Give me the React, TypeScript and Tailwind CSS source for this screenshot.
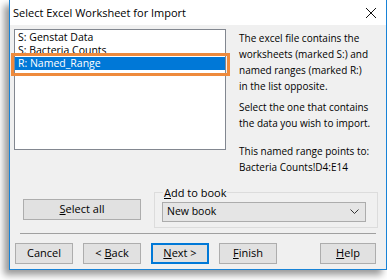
import React from 'react';

const font = { fontFamily: '"Open Sans", "Noto Sans", sans-serif' };

const Btn: React.FC<{ children: React.ReactNode; w?: string; primary?: boolean }> = ({ children, w = 'w-[58px]', primary }) => (
  <div
    className={`${w} h-[21px] flex items-center justify-center bg-[#e1e1e1] text-[11px] text-black ${
      primary ? 'border-2 border-[#0078d7]' : 'border border-[#adadad]'
    }`}
  >
    {children}
  </div>
);

export default function App() {
  return (
    <div className="w-[387px] h-[280px] bg-white pl-[9px]" style={font}>
      <div className="relative w-[378px] h-[270px] flex flex-col border-x border-b border-[#1883d7] bg-[#f0f0f0] shadow-[-5px_5px_7px_rgba(0,0,0,0.4)]">
        {/* title bar */}
        <div className="h-[25px] bg-white flex items-center justify-between pl-[3px] pr-[6px] pt-[1px]">
          <span className="text-[11px] text-black">Select Excel Worksheet for Import</span>
          <svg width="12" height="12" viewBox="0 0 12 12" className="mr-[3px]">
            <path d="M1 1 L11 11 M11 1 L1 11" stroke="#111" strokeWidth="1" />
          </svg>
        </div>

        <div className="flex-1 flex flex-col">
          {/* top row */}
          <div className="flex pt-[4px] pl-[4px] gap-[13px]">
            <div className="w-[212px] h-[121px] bg-white border border-[#828790] pt-[1px] text-[10.5px] leading-[13px]">
              <div className="pl-[3px] h-[13px]">S: Genstat Data</div>
              <div className="pl-[3px] h-[13px]">S: Bacteria Counts</div>
              <div className="pl-[3px] h-[13px] bg-[#0078d7] text-white">R: Named_Range</div>
            </div>
            <div className="text-[10px] leading-[16px] text-black whitespace-nowrap pt-[1px]">
              <p>
                The excel file contains the
                <br />
                worksheets (marked S:) and
                <br />
                named ranges (marked R:)
                <br />
                in the list opposite.
              </p>
              <p className="mt-[5px]">
                Select the one that contains
                <br />
                the data you wish to import.
              </p>
              <p className="mt-[12px]">
                This named range points to:
                <br />
                Bacteria Counts!D4:E14
              </p>
            </div>
          </div>

          {/* middle row */}
          <div className="flex items-end mt-[auto] pl-[13px] gap-[13px]">
            <div className="mb-[8px]">
              <Btn w="w-[118px]">
                <span>
                  <u>S</u>elect all
                </span>
              </Btn>
            </div>
            <fieldset className="w-[224px] border border-[#dcdcdc] pl-[7px] pb-[5px]">
              <legend className="ml-[1px] px-[1px] text-[11px] leading-[13px] text-black">
                <u>A</u>dd to book
              </legend>
              <div className="w-[204px] h-[20px] mt-[3px] flex items-center justify-between bg-[#e5e5e5] border border-[#acacac] pl-[4px] pr-[6px] text-[10.5px]">
                <span>New book</span>
                <svg width="9" height="6" viewBox="0 0 9 6">
                  <path d="M0.5 0.5 L4.5 4.5 L8.5 0.5" stroke="#333" strokeWidth="1" fill="none" />
                </svg>
              </div>
            </fieldset>
          </div>

          <div className="mx-[10px] mt-[5px] border-t border-[#a0a0a0]" />

          {/* bottom buttons */}
          <div className="flex items-center pl-[5px] pr-[10px] pt-[9px] pb-[5px] gap-[10px]">
            <Btn>Cancel</Btn>
            <Btn>
              <span>
                &lt; <u>B</u>ack
              </span>
            </Btn>
            <Btn primary>
              <span>
                <u>N</u>ext &gt;
              </span>
            </Btn>
            <Btn>
              <span>
                <u>F</u>inish
              </span>
            </Btn>
            <div className="ml-auto">
              <Btn w="w-[56px]">
                <span>
                  <u>H</u>elp
                </span>
              </Btn>
            </div>
          </div>
        </div>

        {/* annotation */}
        <div className="absolute left-[1px] top-[53px] w-[219px] h-[23px] border-[3px] border-[#ee8a3c]" />
      </div>
    </div>
  );
}
